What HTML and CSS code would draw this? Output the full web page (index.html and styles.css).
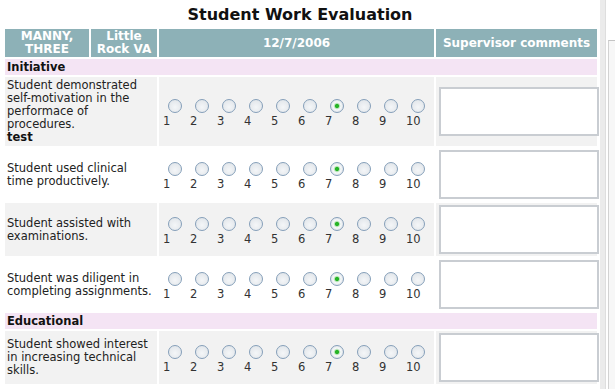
FILE: index.html
```html
<!DOCTYPE html>
<html>
<head>
    <meta charset="UTF-8" />
    <title>Student Work Evaluation</title>
    <link rel="stylesheet" href="styles.css">
</head>
<body>
    <div class="page">
        <h1 class="title">Student Work Evaluation</h1>
        <table class="eval">
            <colgroup>
                <col class="c-name">
                <col class="c-site">
                <col class="c-date">
                <col class="c-comments">
            </colgroup>
            <thead>
                <tr>
                    <th>MANNY,<br>THREE</th>
                    <th>Little Rock VA</th>
                    <th>12/7/2006</th>
                    <th>Supervisor comments</th>
                </tr>
            </thead>
            <tbody>
                <tr class="section"><td colspan="4">Initiative</td></tr>
                <tr class="item alt">
                    <td colspan="2" class="question">Student demonstrated self-motivation in the performace of procedures.<br><b>test</b></td>
                    <td class="rating">
                        <label class="opt"><input type="radio" name="q1" value="1"><span>1</span></label><label class="opt"><input type="radio" name="q1" value="2"><span>2</span></label><label class="opt"><input type="radio" name="q1" value="3"><span>3</span></label><label class="opt"><input type="radio" name="q1" value="4"><span>4</span></label><label class="opt"><input type="radio" name="q1" value="5"><span>5</span></label><label class="opt"><input type="radio" name="q1" value="6"><span>6</span></label><label class="opt"><input type="radio" name="q1" value="7" checked><span>7</span></label><label class="opt"><input type="radio" name="q1" value="8"><span>8</span></label><label class="opt"><input type="radio" name="q1" value="9"><span>9</span></label><label class="opt"><input type="radio" name="q1" value="10"><span>10</span></label>
                    </td>
                    <td class="comment"><textarea></textarea></td>
                </tr>
                <tr class="item">
                    <td colspan="2" class="question">Student used clinical time productively.</td>
                    <td class="rating">
                        <label class="opt"><input type="radio" name="q2" value="1"><span>1</span></label><label class="opt"><input type="radio" name="q2" value="2"><span>2</span></label><label class="opt"><input type="radio" name="q2" value="3"><span>3</span></label><label class="opt"><input type="radio" name="q2" value="4"><span>4</span></label><label class="opt"><input type="radio" name="q2" value="5"><span>5</span></label><label class="opt"><input type="radio" name="q2" value="6"><span>6</span></label><label class="opt"><input type="radio" name="q2" value="7" checked><span>7</span></label><label class="opt"><input type="radio" name="q2" value="8"><span>8</span></label><label class="opt"><input type="radio" name="q2" value="9"><span>9</span></label><label class="opt"><input type="radio" name="q2" value="10"><span>10</span></label>
                    </td>
                    <td class="comment"><textarea></textarea></td>
                </tr>
                <tr class="item alt">
                    <td colspan="2" class="question">Student assisted with examinations.</td>
                    <td class="rating">
                        <label class="opt"><input type="radio" name="q3" value="1"><span>1</span></label><label class="opt"><input type="radio" name="q3" value="2"><span>2</span></label><label class="opt"><input type="radio" name="q3" value="3"><span>3</span></label><label class="opt"><input type="radio" name="q3" value="4"><span>4</span></label><label class="opt"><input type="radio" name="q3" value="5"><span>5</span></label><label class="opt"><input type="radio" name="q3" value="6"><span>6</span></label><label class="opt"><input type="radio" name="q3" value="7" checked><span>7</span></label><label class="opt"><input type="radio" name="q3" value="8"><span>8</span></label><label class="opt"><input type="radio" name="q3" value="9"><span>9</span></label><label class="opt"><input type="radio" name="q3" value="10"><span>10</span></label>
                    </td>
                    <td class="comment"><textarea></textarea></td>
                </tr>
                <tr class="item">
                    <td colspan="2" class="question">Student was diligent in completing assignments.</td>
                    <td class="rating">
                        <label class="opt"><input type="radio" name="q4" value="1"><span>1</span></label><label class="opt"><input type="radio" name="q4" value="2"><span>2</span></label><label class="opt"><input type="radio" name="q4" value="3"><span>3</span></label><label class="opt"><input type="radio" name="q4" value="4"><span>4</span></label><label class="opt"><input type="radio" name="q4" value="5"><span>5</span></label><label class="opt"><input type="radio" name="q4" value="6"><span>6</span></label><label class="opt"><input type="radio" name="q4" value="7" checked><span>7</span></label><label class="opt"><input type="radio" name="q4" value="8"><span>8</span></label><label class="opt"><input type="radio" name="q4" value="9"><span>9</span></label><label class="opt"><input type="radio" name="q4" value="10"><span>10</span></label>
                    </td>
                    <td class="comment"><textarea></textarea></td>
                </tr>
                <tr class="section"><td colspan="4">Educational</td></tr>
                <tr class="item alt">
                    <td colspan="2" class="question">Student showed interest in increasing technical skills.</td>
                    <td class="rating">
                        <label class="opt"><input type="radio" name="q5" value="1"><span>1</span></label><label class="opt"><input type="radio" name="q5" value="2"><span>2</span></label><label class="opt"><input type="radio" name="q5" value="3"><span>3</span></label><label class="opt"><input type="radio" name="q5" value="4"><span>4</span></label><label class="opt"><input type="radio" name="q5" value="5"><span>5</span></label><label class="opt"><input type="radio" name="q5" value="6"><span>6</span></label><label class="opt"><input type="radio" name="q5" value="7" checked><span>7</span></label><label class="opt"><input type="radio" name="q5" value="8"><span>8</span></label><label class="opt"><input type="radio" name="q5" value="9"><span>9</span></label><label class="opt"><input type="radio" name="q5" value="10"><span>10</span></label>
                    </td>
                    <td class="comment"><textarea></textarea></td>
                </tr>
            </tbody>
        </table>
    </div>
    <div class="side"><div class="side-box"></div></div>
</body>
</html>
```

FILE: styles.css
```css
html {
    background: #fff;
}

body {
    margin: 0;
    font-family: "DejaVu Sans", Verdana, sans-serif;
    font-size: 11.5px;
    line-height: 13px;
    color: #222;
    display: flex;
    height: 389px;
    overflow: hidden;
}

.page {
    width: 600px;
    flex: none;
}

.title {
    margin: 0;
    padding-top: 5px;
    height: 22px;
    font-size: 16px;
    line-height: 20px;
    text-align: center;
    color: #111;
}

table.eval {
    margin-left: 3px;
    width: 596px;
    table-layout: fixed;
    border-collapse: separate;
    border-spacing: 2px;
}

col.c-name { width: 84px; }
col.c-site { width: 66px; }
col.c-date { width: 275px; }
col.c-comments { width: 161px; }

.eval th {
    background: #8db1b7;
    color: #fff;
    font-size: 12px;
    font-weight: bold;
    text-align: center;
    vertical-align: middle;
    padding: 1px 2px;
    line-height: 13px;
}

.eval td {
    padding: 2px;
    vertical-align: middle;
}

.section td {
    background: #f4e4f4;
    font-weight: bold;
    color: #111;
    padding: 2px 2px 1px;
}

.item.alt td {
    background: #f2f2f2;
}

.question {
    padding: 2px 2px 3px;
}

.question b {
    color: #111;
}

.rating {
    white-space: nowrap;
}

.opt {
    display: inline-block;
    width: 27px;
    vertical-align: middle;
    color: #333;
}

.opt span {
    display: block;
    padding-left: 2px;
    line-height: 13px;
}

.opt input {
    appearance: none;
    -webkit-appearance: none;
    display: block;
    width: 14px;
    height: 14px;
    margin: 3px 0 2px 7px;
    border: 1px solid #859fb9;
    border-radius: 50%;
    background: radial-gradient(circle at 50% 60%, #f4f6f8 0, #e4e8ec 70%, #d6dce2 100%);
    box-sizing: border-box;
}

.opt input:checked {
    background: radial-gradient(circle, #27b427 0, #27b427 1.6px, #bfe6bf 2.6px, #f6f8fa 3.8px, #e4e8ec 70%, #d6dce2 100%);
}

.comment textarea {
    display: block;
    box-sizing: border-box;
    width: 160px;
    height: 49px;
    margin: 0 0 0 1px;
    border: 2px solid #c9cdd2;
    background: #fff;
    resize: none;
    font: inherit;
}

.side {
    flex: none;
    width: 15px;
    height: 389px;
    display: flex;
}

.side::before {
    content: "";
    width: 5px;
    margin-right: 2px;
    background: #ebebeb;
    border-right: 1px solid #dedede;
}

.side-box {
    flex: 1;
    margin-top: 40px;
    border-left: 1px solid #d2d2d2;
    border-top: 1px solid #c4c4c4;
    background: #f7f7f7;
}
```
